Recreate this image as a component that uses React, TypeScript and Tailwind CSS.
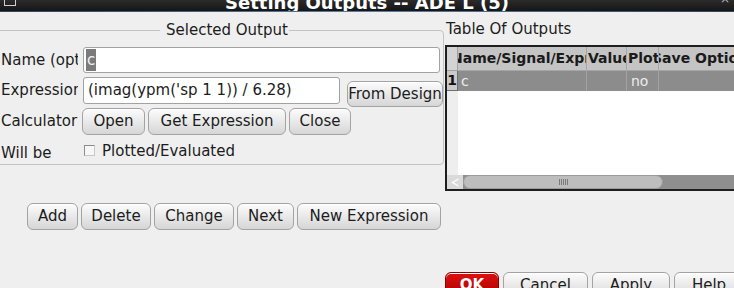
import type { ReactNode } from 'react';
import clsx from 'clsx';

const font = "font-['DejaVu_Sans',sans-serif]";

function Btn({ w, children, className }: { w: string; children: ReactNode; className?: string }) {
  return (
    <div
      className={clsx(
        'h-[27px] shrink-0 flex items-center justify-center rounded-[6px] border border-[#a3a3a3] bg-linear-to-b from-[#fcfcfc] to-[#d6d6d6] shadow-[inset_0_1px_0_#ffffff] leading-[17px] whitespace-nowrap',
        w,
        className,
      )}
    >
      {children}
    </div>
  );
}

function Label({ children }: { children: ReactNode }) {
  return <div className="ml-[6px] w-[77px] shrink-0 overflow-hidden whitespace-nowrap leading-[17px]">{children}</div>;
}

function Grip() {
  return (
    <div className="flex gap-[1px]">
      <div className="h-[6px] w-px bg-[#7a7a7a]" />
      <div className="h-[6px] w-px bg-[#7a7a7a]" />
      <div className="h-[6px] w-px bg-[#7a7a7a]" />
      <div className="h-[6px] w-px bg-[#7a7a7a]" />
      <div className="h-[6px] w-px bg-[#7a7a7a]" />
    </div>
  );
}

export default function App() {
  return (
    <div className={clsx('w-[734px] h-[288px] overflow-hidden bg-[#efefef] text-[15px] text-[#1c1c1c]', font)}>
      {/* window title bar, mostly scrolled out of view */}
      <div className="grid h-[11px] grid-cols-[1fr_auto_1fr] overflow-hidden bg-linear-to-b from-[#2b2b2b] to-[#161616]">
        <div className="ml-[4px] mt-[-6px] h-[12px] w-[12px] border border-[#cfcfcf]" />
        <div className="mt-[-6px] text-[18px] font-bold leading-[18px] text-white">Setting Outputs -- ADE L (5)</div>
        <div className="mr-[4px] mt-[-7px] justify-self-end text-[12px] leading-[12px] text-[#bbbbbb]">×</div>
      </div>
      <div className="h-px bg-linear-to-r from-[#2f4660] via-[#5d7ea3] to-[#2f4660]" />

      <div className="flex">
        {/* left side */}
        <div className="w-[444px] shrink-0">
          <fieldset className="ml-[-6px] mt-[10px] rounded-[4px] border border-[#c3c3c3] pb-[4px]">
            <legend className="ml-[165px] pl-[6px] pr-px leading-[17px]">Selected Output</legend>

            <div className="mt-[8px] flex h-[26px] items-center">
              <Label>Name (optional)</Label>
              <div className="ml-[5px] flex h-[26px] w-[357px] items-center rounded-[3px] border border-[#a2a2a2] bg-white pl-[2px]">
                <span className="inline-block bg-[#7b7b7b] px-px leading-[22px] text-[#f2f2f2]">c</span>
              </div>
            </div>

            <div className="mt-[4px] flex h-[30px] items-start">
              <div className="flex h-[27px] items-center">
                <Label>Expression</Label>
              </div>
              <div className="ml-[5px] flex h-[27px] w-[257px] items-center rounded-[3px] border border-[#a2a2a2] bg-white pl-[4px] leading-[17px]">
                (imag(ypm('sp 1 1)) / 6.28)
              </div>
              <Btn w="w-[96px]" className="ml-[7px] mt-[4px] !h-[26px]">From Design</Btn>
            </div>

            <div className="mt-[1px] flex h-[27px] items-center">
              <Label>Calculator</Label>
              <div className="ml-[4px] flex gap-[3px]">
                <Btn w="w-[63px]">Open</Btn>
                <Btn w="w-[138px]">Get Expression</Btn>
                <Btn w="w-[62px]">Close</Btn>
              </div>
            </div>

            <div className="mt-[8px] flex h-[17px] items-start">
              <div className="mt-[2px]">
                <Label>Will be</Label>
              </div>
              <div className="ml-[6px] mt-[2px] h-[11px] w-[11px] border border-[#8c8c8c] border-r-[#c8c8c8] border-b-[#c8c8c8] bg-[#f7f7f7]" />
              <div className="ml-[7px] leading-[17px]">Plotted/Evaluated</div>
            </div>
          </fieldset>

          <div className="mt-[38px] flex gap-[3px] pl-[27px]">
            <Btn w="w-[51px]">Add</Btn>
            <Btn w="w-[70px]">Delete</Btn>
            <Btn w="w-[80px]">Change</Btn>
            <Btn w="w-[57px]">Next</Btn>
            <Btn w="w-[144px]">New Expression</Btn>
          </div>
        </div>

        {/* right side */}
        <div className="min-w-0 flex-1 overflow-hidden">
          <div className="ml-[2px] mt-[9px] whitespace-nowrap leading-[17px]">Table Of Outputs</div>

          <div className="ml-[1px] mt-[7px] w-[300px] border-b-2 border-l-2 border-t-2 border-[#1e1e1e] bg-white">
            <div className="flex h-[24px] text-[14px] font-bold leading-[23px] text-[#1a1a1a]">
              <div className="w-[11px] shrink-0 border-b border-r border-[#a0a0a0] bg-[#d3d3d3]" />
              <div className="w-[129px] shrink-0 overflow-hidden whitespace-nowrap border-b border-r border-[#a6a6a6] bg-[#c4c4c4]">
                <span className="ml-[-7px] inline-block">Name/Signal/Expression</span>
              </div>
              <div className="w-[40px] shrink-0 overflow-hidden whitespace-nowrap border-b border-r border-[#a6a6a6] bg-[#c4c4c4] pl-px">
                Value
              </div>
              <div className="w-[32px] shrink-0 overflow-hidden whitespace-nowrap border-b border-r border-[#a6a6a6] bg-[#c4c4c4] pl-px">
                Plot
              </div>
              <div className="flex-1 overflow-hidden whitespace-nowrap border-b border-[#a6a6a6] bg-[#c4c4c4]">
                <span className="ml-[-7px] inline-block">Save Options</span>
              </div>
            </div>

            <div className="flex h-[20px] text-[14px] leading-[17px] text-[#ededed]">
              <div className="flex w-[11px] shrink-0 items-center justify-center border-b border-r border-[#6f6f6f] bg-[#cacaca] font-bold text-[#111111]">
                1
              </div>
              <div className="flex w-[129px] shrink-0 items-center border-r border-[#a3a3a3] bg-[#8c8c8c] pl-[3px]">c</div>
              <div className="w-[40px] shrink-0 border-r border-[#a3a3a3] bg-[#8c8c8c]" />
              <div className="flex w-[32px] shrink-0 items-center border-r border-[#a3a3a3] bg-[#8c8c8c] pl-[4px]">no</div>
              <div className="flex-1 bg-[#8c8c8c]" />
            </div>

            <div className="flex h-[84px]">
              <div className="w-[11px] shrink-0 bg-[#eeeeee]" />
              <div className="flex-1 bg-white" />
            </div>

            <div className="flex h-[14px] bg-[#8f8f8f]">
              <div className="flex w-[16px] shrink-0 items-center justify-center bg-[#dadada]">
                <svg width="9" height="9" viewBox="0 0 9 9">
                  <path d="M7.5 1 L1.5 4.5 L7.5 8" fill="none" stroke="#ffffff" strokeWidth="1.3" />
                </svg>
              </div>
              <div className="flex w-[200px] shrink-0 items-center justify-center rounded-full border border-[#9b9b9b] bg-[#bdbdbd]">
                <Grip />
              </div>
            </div>
          </div>

          <div className="ml-[1px] mt-[81px] flex gap-[4px]">
            <Btn w="w-[54px]" className="!border-[#8c0000] !from-[#de1010] !to-[#a80000] font-bold text-white">
              OK
            </Btn>
            <Btn w="w-[85px]">Cancel</Btn>
            <Btn w="w-[78px]">Apply</Btn>
            <Btn w="w-[70px]">Help</Btn>
          </div>
        </div>
      </div>
    </div>
  );
}
